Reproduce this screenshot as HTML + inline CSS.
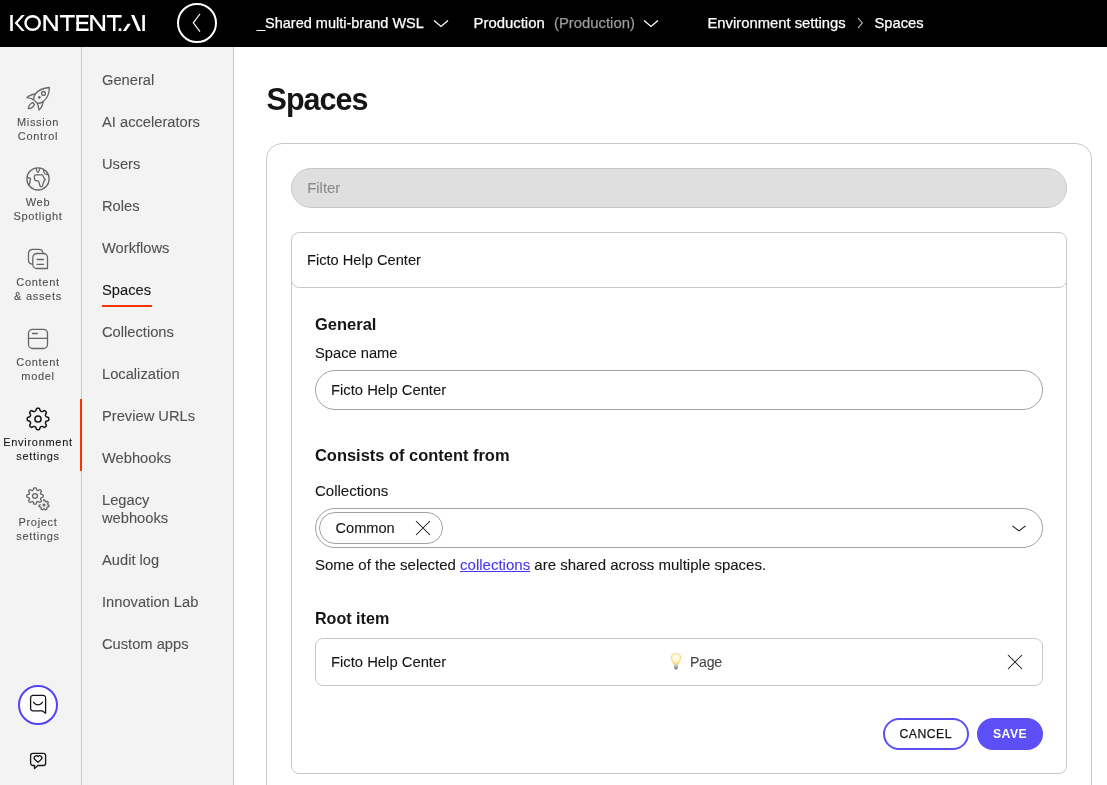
<!DOCTYPE html>
<html><head><meta charset="utf-8">
<style>
*{box-sizing:border-box;margin:0;padding:0}
html,body{width:1107px;height:785px;overflow:hidden;background:#fff;font-family:"Liberation Sans",sans-serif;color:#151515}
.abs{position:absolute}
#top{position:absolute;left:0;top:0;width:1107px;height:47px;background:#000}
#top .t{position:absolute;top:14px;line-height:18px;font-size:14.6px;color:#fff;white-space:nowrap;-webkit-text-stroke:0.25px #fff}
#rail{position:absolute;left:0;top:47px;width:82px;height:738px;background:#f3f3f3;border-right:1px solid #c8c8c8}
#nav{position:absolute;left:82px;top:47px;width:152px;height:738px;background:#f3f3f3;border-right:1px solid #c8c8c8}
.ri{position:absolute;left:0;width:81px;height:72px}
.ri svg{position:absolute;left:24px;top:6px;width:28px;height:28px}
.ri .l{position:absolute;left:0;width:76px;text-align:center;font-size:11px;line-height:14px;letter-spacing:0.7px;color:#4f4f4f;-webkit-text-stroke:0.1px currentColor;top:29px;padding-left:0}
.ni{position:absolute;left:20px;font-size:14.7px;-webkit-text-stroke:0.1px currentColor;line-height:18px;color:#525252;white-space:nowrap}
.txt{position:absolute;white-space:nowrap;-webkit-text-stroke:0.1px currentColor}
.b{font-weight:bold;-webkit-text-stroke:0}
</style></head><body>
<div id="wrap" style="position:absolute;left:0;top:0;width:1107px;height:785px;will-change:transform">
<div id="top">
  <svg class="abs" style="left:0;top:0" width="160" height="47" viewBox="0 0 160 47">
    <g fill="#fff">
      <!-- K -->
      <rect x="10.2" y="15" width="2.6" height="16"/>
      <polygon points="21.8,15 24.8,15 17.6,23 24.8,31 21.8,31 14.6,23"/>
    </g>
    <g fill="none" stroke="#fff" stroke-width="2.5">
      <ellipse cx="32.6" cy="23" rx="7.1" ry="6.8"/>
    </g>
    <g fill="#fff">
      <!-- N -->
      <rect x="43.4" y="15" width="2.5" height="16"/>
      <rect x="55.3" y="15" width="2.5" height="16"/>
      <polygon points="43.4,15 46.4,15 57.8,31 54.8,31"/>
      <!-- T -->
      <rect x="59.9" y="15" width="14.9" height="2.5"/>
      <rect x="66.1" y="15" width="2.5" height="16"/>
      <!-- E -->
      <rect x="76.4" y="15" width="2.5" height="16"/>
      <rect x="76.4" y="15" width="12.2" height="2.5"/>
      <rect x="76.4" y="21.8" width="11.6" height="2.4"/>
      <rect x="76.4" y="28.5" width="12.2" height="2.5"/>
      <!-- N -->
      <rect x="90.2" y="15" width="2.5" height="16"/>
      <rect x="102.6" y="15" width="2.5" height="16"/>
      <polygon points="90.2,15 93.2,15 105.1,31 102.1,31"/>
      <!-- T -->
      <rect x="106.8" y="15" width="14.9" height="2.5"/>
      <rect x="113" y="15" width="2.5" height="16"/>
      <!-- . -->
      <rect x="118.6" y="28.3" width="2.8" height="2.7"/>
      <!-- A partial -->
      <polygon points="122.8,31 126,31 130.8,23.8 127.6,23.8"/>
      <polygon points="131,15 134.2,15 141,31 137.8,31"/>
      <!-- I -->
      <rect x="142.3" y="15" width="2.6" height="16"/>
    </g>
  </svg>
  <svg class="abs" style="left:172px;top:0" width="50" height="47" viewBox="172 0 50 47">
    <circle cx="197" cy="23" r="19" fill="none" stroke="#fff" stroke-width="2"/>
    <polyline points="200,14 193.3,22.8 200,31.6" fill="none" stroke="#fff" stroke-width="1.2"/>
  </svg>
  <div class="t" style="left:257px;font-size:14.5px">_Shared multi-brand WSL</div>
  <svg class="abs" style="left:433px;top:19px" width="16" height="9" viewBox="0 0 16 9"><polyline points="1,1.5 8,7.5 15,1.5" fill="none" stroke="#fff" stroke-width="1.3"/></svg>
  <div class="t" style="left:473.5px;font-size:14.9px">Production</div>
  <div class="t" style="left:554px;font-size:14.85px;color:#9a9a9a;-webkit-text-stroke:0.25px #9a9a9a">(Production)</div>
  <svg class="abs" style="left:643px;top:19px" width="16" height="9" viewBox="0 0 16 9"><polyline points="1,1.5 8,7.5 15,1.5" fill="none" stroke="#fff" stroke-width="1.3"/></svg>
  <div class="t" style="left:707.5px;font-size:14.8px">Environment settings</div>
  <svg class="abs" style="left:855px;top:15px" width="10" height="16" viewBox="0 0 10 16"><polyline points="3.4,3.3 7.3,7.9 3.4,12.7" fill="none" stroke="#b8b8b8" stroke-width="1.1" stroke-linecap="round"/></svg>
  <div class="t" style="left:874.5px;font-size:14.75px">Spaces</div>
</div>

<div id="rail">
  <div class="ri" style="top:32px">
    <svg viewBox="0 0 28 28" fill="none" stroke="#666" stroke-width="1.3" stroke-linejoin="round" stroke-linecap="round">
      <path d="M25.4 2.5 C19 3 14 5.5 11.3 9 C10 11 9.6 13 9.6 14.6 L13.4 18.4 C15 18.4 17.2 17.8 19.2 16.6 C22.6 14 25.2 9 25.4 2.5 Z"/>
      <path d="M11.3 9 C7.5 9.6 4.5 11 2.9 12.6 C5.3 12.8 7.6 13.6 9.6 14.6"/>
      <path d="M19.2 16.6 C18.6 20.3 17.4 23.2 15 25 C14.8 22.6 14 20.3 13.4 18.4"/>
      <path d="M4.4 23.6 C4.6 20.6 6.6 18.4 8.5 17.5 L10.4 19.4 C9.6 21.4 7.4 23.4 4.4 23.6 Z"/>
      <circle cx="19.5" cy="8.4" r="1.9"/>
      <circle cx="15.4" cy="12.4" r="0.7" fill="#666"/>
    </svg>
    <div class="l" style="top:36px">Mission<br>Control</div>
  </div>
  <div class="ri" style="top:112px">
    <svg viewBox="0 0 28 28" fill="none" stroke="#666" stroke-width="1.3" stroke-linejoin="round" stroke-linecap="round">
      <circle cx="14" cy="13.9" r="11.1"/>
      <path d="M11.8 9.9 H18.4 C19.2 10.2 19.3 11.8 19.8 12.8 C20.2 13.6 20.9 14.1 21.3 14.4 C20.7 14.9 20.2 15.4 19.9 16.2 C19.5 17.8 18.9 20 18.3 21 C17.7 22 16.5 22 16.1 21 C15.5 19.6 15.1 17.6 14.7 16.6 C14.3 15.8 13.5 15.7 12.5 15.7 C11.1 15.7 10.4 14.6 10.4 13.2 V11.3 C10.4 10.5 11 9.9 11.8 9.9 Z"/>
      <path d="M12.3 3.3 C12.4 5.2 12.9 6.9 13.9 7.5 C14.8 6.8 15.5 5.4 15.8 3.5"/>
      <path d="M19.6 4.4 C19.4 6 19.6 7.8 21 8.8 C22.2 9.6 23.6 9.8 24.5 9.6"/>
      <path d="M3.2 12.3 C4.4 12.4 5.8 13 6.5 13.8 C6.2 16 5.6 18.6 5 20.2"/>
    </svg>
    <div class="l" style="top:36px">Web<br>Spotlight</div>
  </div>
  <div class="ri" style="top:192px">
    <svg viewBox="0 0 28 28" fill="none" stroke="#666" stroke-width="1.3" stroke-linejoin="round" stroke-linecap="round">
      <path d="M8.5 19.2 C6.2 19 4.5 17.4 4.5 15 V8.4 C4.5 6 6.3 4.3 8.6 4.3 H15 C17.2 4.3 18.7 5.8 19 8"/>
      <path d="M12.9 8.5 H19.4 C21.7 8.5 23.5 10.3 23.5 12.6 V23.5 H12.9 C10.6 23.5 8.8 21.7 8.8 19.4 V12.6 C8.8 10.3 10.6 8.5 12.9 8.5 Z"/>
      <path d="M13.1 14.5 H19.6 M13.1 19.3 H19.6"/>
    </svg>
    <div class="l" style="top:36px">Content<br>&amp; assets</div>
  </div>
  <div class="ri" style="top:272px">
    <svg viewBox="0 0 28 28" fill="none" stroke="#666" stroke-width="1.3" stroke-linejoin="round" stroke-linecap="round">
      <rect x="4.5" y="4.3" width="19" height="19.2" rx="4"/>
      <path d="M4.5 13.3 H23.5 M8.6 8.5 H13.4"/>
    </svg>
    <div class="l" style="top:36px">Content<br>model</div>
  </div>
  <div class="ri" style="top:352px">
    <svg viewBox="0 0 28 28" fill="none" stroke="#151515" stroke-width="1.5" stroke-linejoin="round" stroke-linecap="round">
      <path d="M12.04 5.12 L12.29 4.08 Q12.50 3.20 13.40 3.20 L14.60 3.20 Q15.50 3.20 15.71 4.08 L15.96 5.12 Q16.17 5.99 17.01 6.33 L17.30 6.45 Q18.13 6.80 18.90 6.33 L19.81 5.78 Q20.58 5.31 21.21 5.94 L22.06 6.79 Q22.69 7.42 22.22 8.19 L21.67 9.10 Q21.20 9.87 21.55 10.70 L21.67 10.99 Q22.01 11.83 22.88 12.04 L23.92 12.29 Q24.80 12.50 24.80 13.40 L24.80 14.60 Q24.80 15.50 23.92 15.71 L22.88 15.96 Q22.01 16.17 21.67 17.01 L21.55 17.30 Q21.20 18.13 21.67 18.90 L22.22 19.81 Q22.69 20.58 22.06 21.21 L21.21 22.06 Q20.58 22.69 19.81 22.22 L18.90 21.67 Q18.13 21.20 17.30 21.55 L17.01 21.67 Q16.17 22.01 15.96 22.88 L15.71 23.92 Q15.50 24.80 14.60 24.80 L13.40 24.80 Q12.50 24.80 12.29 23.92 L12.04 22.88 Q11.83 22.01 10.99 21.67 L10.70 21.55 Q9.87 21.20 9.10 21.67 L8.19 22.22 Q7.42 22.69 6.79 22.06 L5.94 21.21 Q5.31 20.58 5.78 19.81 L6.33 18.90 Q6.80 18.13 6.45 17.30 L6.33 17.01 Q5.99 16.17 5.12 15.96 L4.08 15.71 Q3.20 15.50 3.20 14.60 L3.20 13.40 Q3.20 12.50 4.08 12.29 L5.12 12.04 Q5.99 11.83 6.33 10.99 L6.45 10.70 Q6.80 9.87 6.33 9.10 L5.78 8.19 Q5.31 7.42 5.94 6.79 L6.79 5.94 Q7.42 5.31 8.19 5.78 L9.10 6.33 Q9.87 6.80 10.70 6.45 L10.99 6.33 Q11.83 5.99 12.04 5.12 Z"/>
      <circle cx="14" cy="14" r="3.1"/>
    </svg>
    <div class="l" style="top:36px;color:#151515">Environment<br>settings</div>
  </div>
  <div class="ri" style="top:432px">
    <svg viewBox="0 0 28 28" fill="none" stroke="#666" stroke-width="1.3" stroke-linejoin="round" stroke-linecap="round">
      <path d="M18.91 16.00 L19.01 15.47 Q19.10 14.98 19.60 14.98 L20.40 14.98 Q20.90 14.98 20.99 15.47 L21.09 16.00 Q21.18 16.49 21.59 16.69 L21.60 16.69 Q22.01 16.89 22.45 16.66 L22.93 16.40 Q23.37 16.17 23.68 16.56 L24.17 17.18 Q24.48 17.57 24.16 17.95 L23.80 18.36 Q23.48 18.74 23.58 19.18 L23.58 19.19 Q23.68 19.63 24.14 19.83 L24.64 20.05 Q25.09 20.24 24.98 20.73 L24.81 21.50 Q24.70 21.99 24.20 21.97 L23.66 21.95 Q23.16 21.93 22.87 22.29 L22.87 22.29 Q22.58 22.65 22.71 23.13 L22.85 23.65 Q22.99 24.14 22.53 24.35 L21.82 24.70 Q21.37 24.91 21.08 24.51 L20.76 24.07 Q20.46 23.67 20.00 23.67 L20.00 23.67 Q19.54 23.67 19.24 24.07 L18.92 24.51 Q18.63 24.91 18.18 24.70 L17.47 24.35 Q17.01 24.14 17.15 23.65 L17.29 23.13 Q17.42 22.65 17.13 22.29 L17.13 22.29 Q16.84 21.93 16.34 21.95 L15.80 21.97 Q15.30 21.99 15.19 21.50 L15.02 20.73 Q14.91 20.24 15.36 20.05 L15.86 19.83 Q16.32 19.63 16.42 19.19 L16.42 19.18 Q16.52 18.74 16.20 18.36 L15.84 17.95 Q15.52 17.57 15.83 17.18 L16.32 16.56 Q16.63 16.17 17.07 16.40 L17.55 16.66 Q17.99 16.89 18.40 16.69 L18.41 16.69 Q18.82 16.49 18.91 16.00 Z"/>
      <circle cx="20" cy="20" r="0.9" fill="#666"/>
      <path d="M9.46 4.45 L9.66 3.47 Q9.80 2.79 10.50 2.79 L11.50 2.79 Q12.20 2.79 12.34 3.47 L12.54 4.45 Q12.68 5.14 13.32 5.40 L13.32 5.40 Q13.96 5.67 14.54 5.28 L15.38 4.73 Q15.96 4.35 16.46 4.84 L17.16 5.54 Q17.65 6.04 17.27 6.62 L16.72 7.46 Q16.33 8.04 16.60 8.68 L16.60 8.68 Q16.86 9.32 17.55 9.46 L18.53 9.66 Q19.21 9.80 19.21 10.50 L19.21 11.50 Q19.21 12.20 18.53 12.34 L17.55 12.54 Q16.86 12.68 16.60 13.32 L16.60 13.32 Q16.33 13.96 16.72 14.54 L17.27 15.38 Q17.65 15.96 17.16 16.46 L16.46 17.16 Q15.96 17.65 15.38 17.27 L14.54 16.72 Q13.96 16.33 13.32 16.60 L13.32 16.60 Q12.68 16.86 12.54 17.55 L12.34 18.53 Q12.20 19.21 11.50 19.21 L10.50 19.21 Q9.80 19.21 9.66 18.53 L9.46 17.55 Q9.32 16.86 8.68 16.60 L8.68 16.60 Q8.04 16.33 7.46 16.72 L6.62 17.27 Q6.04 17.65 5.54 17.16 L4.84 16.46 Q4.35 15.96 4.73 15.38 L5.28 14.54 Q5.67 13.96 5.40 13.32 L5.40 13.32 Q5.14 12.68 4.45 12.54 L3.47 12.34 Q2.79 12.20 2.79 11.50 L2.79 10.50 Q2.79 9.80 3.47 9.66 L4.45 9.46 Q5.14 9.32 5.40 8.68 L5.40 8.68 Q5.67 8.04 5.28 7.46 L4.73 6.62 Q4.35 6.04 4.84 5.54 L5.54 4.84 Q6.04 4.35 6.62 4.73 L7.46 5.28 Q8.04 5.67 8.68 5.40 L8.68 5.40 Q9.32 5.14 9.46 4.45 Z" fill="#f3f3f3" stroke="#f3f3f3" stroke-width="3.6"/>
      <path d="M9.46 4.45 L9.66 3.47 Q9.80 2.79 10.50 2.79 L11.50 2.79 Q12.20 2.79 12.34 3.47 L12.54 4.45 Q12.68 5.14 13.32 5.40 L13.32 5.40 Q13.96 5.67 14.54 5.28 L15.38 4.73 Q15.96 4.35 16.46 4.84 L17.16 5.54 Q17.65 6.04 17.27 6.62 L16.72 7.46 Q16.33 8.04 16.60 8.68 L16.60 8.68 Q16.86 9.32 17.55 9.46 L18.53 9.66 Q19.21 9.80 19.21 10.50 L19.21 11.50 Q19.21 12.20 18.53 12.34 L17.55 12.54 Q16.86 12.68 16.60 13.32 L16.60 13.32 Q16.33 13.96 16.72 14.54 L17.27 15.38 Q17.65 15.96 17.16 16.46 L16.46 17.16 Q15.96 17.65 15.38 17.27 L14.54 16.72 Q13.96 16.33 13.32 16.60 L13.32 16.60 Q12.68 16.86 12.54 17.55 L12.34 18.53 Q12.20 19.21 11.50 19.21 L10.50 19.21 Q9.80 19.21 9.66 18.53 L9.46 17.55 Q9.32 16.86 8.68 16.60 L8.68 16.60 Q8.04 16.33 7.46 16.72 L6.62 17.27 Q6.04 17.65 5.54 17.16 L4.84 16.46 Q4.35 15.96 4.73 15.38 L5.28 14.54 Q5.67 13.96 5.40 13.32 L5.40 13.32 Q5.14 12.68 4.45 12.54 L3.47 12.34 Q2.79 12.20 2.79 11.50 L2.79 10.50 Q2.79 9.80 3.47 9.66 L4.45 9.46 Q5.14 9.32 5.40 8.68 L5.40 8.68 Q5.67 8.04 5.28 7.46 L4.73 6.62 Q4.35 6.04 4.84 5.54 L5.54 4.84 Q6.04 4.35 6.62 4.73 L7.46 5.28 Q8.04 5.67 8.68 5.40 L8.68 5.40 Q9.32 5.14 9.46 4.45 Z"/>
      <circle cx="11" cy="11" r="2.4"/>
    </svg>
    <div class="l" style="top:36px">Project<br>settings</div>
  </div>
  <div class="abs" style="left:80px;top:352px;width:2px;height:72px;background:#ff3300"></div>
  <div class="abs" style="left:18px;top:638px;width:40px;height:40px;border:2px solid #5443f5;border-radius:50%;background:#fff"></div>
  <svg class="abs" style="left:26px;top:645px" width="24" height="24" viewBox="0 0 24 24" fill="none" stroke="#151515" stroke-width="1.3" stroke-linejoin="round" stroke-linecap="round">
    <path d="M7 3.4 H17.2 A2.4 2.4 0 0 1 19.6 5.8 V21.2 L16.2 18.8 H7 A2.4 2.4 0 0 1 4.6 16.4 V5.8 A2.4 2.4 0 0 1 7 3.4 Z"/>
    <path d="M7.5 10.3 Q12 15.6 16.5 10.3"/>
  </svg>
  <svg class="abs" style="left:26px;top:702px" width="24" height="24" viewBox="0 0 24 24" fill="none" stroke="#151515" stroke-width="1.3" stroke-linejoin="round" stroke-linecap="round">
    <path d="M6.8 4.4 H17.4 A2.2 2.2 0 0 1 19.6 6.6 V14.3 A2.2 2.2 0 0 1 17.4 16.5 H11.8 L8.5 19.6 V16.5 H6.8 A2.2 2.2 0 0 1 4.6 14.3 V6.6 A2.2 2.2 0 0 1 6.8 4.4 Z"/>
    <path d="M12 13.4 L8.7 10.3 A1.95 1.95 0 0 1 12 7.5 A1.95 1.95 0 0 1 15.3 10.3 Z"/>
  </svg>
</div>

<div id="nav">
  <div class="ni" style="top:24px;color:#525252">General</div>
  <div class="ni" style="top:66px;color:#525252">AI accelerators</div>
  <div class="ni" style="top:108px;color:#525252">Users</div>
  <div class="ni" style="top:150px;color:#525252">Roles</div>
  <div class="ni" style="top:192px;color:#525252">Workflows</div>
  <div class="ni" style="top:234px;color:#151515">Spaces</div>
  <div class="ni" style="top:276px;color:#525252">Collections</div>
  <div class="ni" style="top:318px;color:#525252">Localization</div>
  <div class="ni" style="top:360px;color:#525252">Preview URLs</div>
  <div class="ni" style="top:402px;color:#525252">Webhooks</div>
  <div class="ni" style="top:444px;color:#525252">Legacy<br>webhooks</div>
  <div class="ni" style="top:504px;color:#525252">Audit log</div>
  <div class="ni" style="top:546px;color:#525252">Innovation Lab</div>
  <div class="ni" style="top:588px;color:#525252">Custom apps</div>
  <div class="abs" style="left:20px;top:258px;width:50px;height:2px;background:#ff3300"></div>
</div>

<div id="main">
  <div class="txt b" style="left:266.5px;top:81.9px;font-size:30.5px;line-height:34px;letter-spacing:-0.95px;color:#151515">Spaces</div>
  <div class="abs" style="left:266px;top:143px;width:826px;height:760px;border:1px solid #c8c8c8;border-radius:16px"></div>
  <div class="abs" style="left:291px;top:168px;width:776px;height:40px;border:1px solid #c8c8c8;border-radius:20px;background:#dfdfdf"></div>
  <div class="txt" style="left:307.2px;top:178px;font-size:14.9px;line-height:20px;color:#8a8a8a">Filter</div>
  <div class="abs" style="left:291px;top:262px;width:776px;height:512px;border:1px solid #c8c8c8;border-radius:8px"></div>
  <div class="abs" style="left:291px;top:232px;width:776px;height:56px;border:1px solid #c8c8c8;border-radius:8px;background:#fff"></div>
  <div class="txt" style="left:307px;top:249.6px;font-size:14.65px;line-height:20px;color:#151515">Ficto Help Center</div>

  <div class="txt b" style="left:315px;top:314.2px;font-size:16.5px;line-height:20px;color:#151515">General</div>
  <div class="txt" style="left:315px;top:342.6px;font-size:14.7px;line-height:20px;color:#151515">Space name</div>
  <div class="abs" style="left:315px;top:370px;width:728px;height:40px;border:1px solid #a0a0a0;border-radius:20px"></div>
  <div class="txt" style="left:331px;top:380.35px;font-size:14.8px;line-height:20px;color:#151515">Ficto Help Center</div>

  <div class="txt b" style="left:315px;top:444.6px;font-size:16.45px;line-height:20px;color:#151515">Consists of content from</div>
  <div class="txt" style="left:315px;top:481.1px;font-size:15px;line-height:20px;color:#151515">Collections</div>
  <div class="abs" style="left:315px;top:508px;width:728px;height:40px;border:1px solid #a0a0a0;border-radius:20px"></div>
  <div class="abs" style="left:319px;top:512px;width:124px;height:32px;border:1px solid #a0a0a0;border-radius:16px"></div>
  <div class="txt" style="left:335.5px;top:517.6px;font-size:14.6px;line-height:20px;color:#151515">Common</div>
  <svg class="abs" style="left:415px;top:520px" width="16" height="16" viewBox="0 0 16 16"><path d="M1 1 L15 15 M15 1 L1 15" stroke="#151515" stroke-width="1.05" fill="none"/></svg>
  <svg class="abs" style="left:1011px;top:523px" width="16" height="10" viewBox="0 0 16 10"><polyline points="1.4,2.9 8,7.9 14.6,2.9" fill="none" stroke="#151515" stroke-width="1.15"/></svg>
  <div class="txt" style="left:315px;top:554.9px;font-size:15px;line-height:20px;color:#151515">Some of the selected <span style="color:#4535f0;text-decoration:underline;text-underline-offset:1px">collections</span> are shared across multiple spaces.</div>

  <div class="txt b" style="left:315px;top:608.2px;font-size:16.1px;line-height:20px;color:#151515">Root item</div>
  <div class="abs" style="left:315px;top:638px;width:728px;height:48px;border:1px solid #c8c8c8;border-radius:8px"></div>
  <div class="txt" style="left:331px;top:651.65px;font-size:14.8px;line-height:20px;color:#151515">Ficto Help Center</div>
  <svg class="abs" style="left:669px;top:652px" width="14" height="19" viewBox="0 0 14 19">
    <defs><radialGradient id="bg" cx="0.5" cy="0.4" r="0.6"><stop offset="0" stop-color="#ffffff"/><stop offset="0.55" stop-color="#fff6d0"/><stop offset="1" stop-color="#f6d878"/></radialGradient>
    <linearGradient id="bs" x1="0" y1="0" x2="0" y2="1"><stop offset="0" stop-color="#d8d8d8"/><stop offset="0.6" stop-color="#a0a0a0"/><stop offset="1" stop-color="#606060"/></linearGradient></defs>
    <path d="M7 1.3 C3.9 1.3 2.1 3.4 2.1 5.9 C2.1 8.2 4 9.6 4.7 12.4 H9.3 C10 9.6 11.9 8.2 11.9 5.9 C11.9 3.4 10.1 1.3 7 1.3 Z" fill="url(#bg)" stroke="#f3d67a" stroke-width="0.8"/>
    <path d="M4.9 12.4 H9.1 V14.8 C9.1 16.2 8.3 17.6 7 17.6 C5.7 17.6 4.9 16.2 4.9 14.8 Z" fill="url(#bs)"/>
  </svg>
  <div class="txt" style="left:690px;top:651.9px;font-size:14.1px;line-height:20px;letter-spacing:-0.3px;color:#454545">Page</div>
  <svg class="abs" style="left:1007px;top:654px" width="16" height="16" viewBox="0 0 16 16"><path d="M1 1 L15 15 M15 1 L1 15" stroke="#151515" stroke-width="1.05" fill="none"/></svg>

  <div class="abs" style="left:883px;top:718px;width:86px;height:32px;border:2px solid #5b4ff5;border-radius:16px;background:#fff"></div>
  <div class="txt" style="left:899.5px;top:723.5px;font-size:12.2px;line-height:20px;letter-spacing:0.5px;color:#151515;-webkit-text-stroke:0.25px #151515">CANCEL</div>
  <div class="abs" style="left:977px;top:718px;width:66px;height:32px;border-radius:16px;background:#5b4ff5"></div>
  <div class="txt b" style="left:993px;top:723.5px;font-size:12.2px;line-height:20px;letter-spacing:0.45px;color:#fff">SAVE</div>
</div>
</div>
</body></html>
